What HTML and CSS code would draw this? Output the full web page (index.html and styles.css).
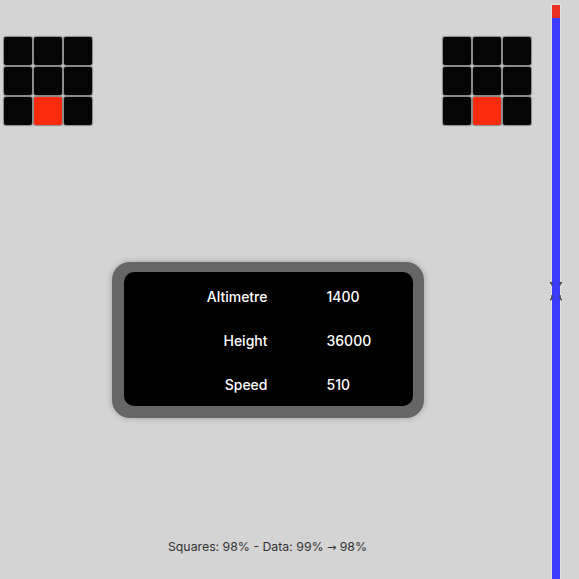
FILE: index.html
```html
<!DOCTYPE html>
<html>
<head>
<meta charset="utf-8">
<link rel="stylesheet" href="styles.css">
</head>
<body>
<div class="app">
  <div class="main">
    <div class="grids">
      <div class="grid">
        <div class="cell"></div><div class="cell"></div><div class="cell"></div>
        <div class="cell"></div><div class="cell"></div><div class="cell"></div>
        <div class="cell"></div><div class="cell red"></div><div class="cell"></div>
      </div>
      <div class="grid">
        <div class="cell"></div><div class="cell"></div><div class="cell"></div>
        <div class="cell"></div><div class="cell"></div><div class="cell"></div>
        <div class="cell"></div><div class="cell red"></div><div class="cell"></div>
      </div>
    </div>
    <div class="panel">
      <div class="panel-inner">
        <div class="row"><span class="label">Altimetre</span><span class="value">1400</span></div>
        <div class="row"><span class="label">Height</span><span class="value">36000</span></div>
        <div class="row"><span class="label">Speed</span><span class="value">510</span></div>
      </div>
    </div>
    <div class="status">Squares: 98% - Data: 99% <span class="arrow">→</span> 98%</div>
  </div>
  <div class="side">
    <div class="bar"><div class="bar-fill"></div></div>
    <svg class="cursor" width="15" height="21" viewBox="0 0 15 21">
      <path d="M1 1.5 C2.5 1.5 3 2 3 4.5 M13 1.5 C11.5 1.5 11 2 11 4.5 M3 14 C3 18 2.5 19 1 19 M11 14 C11 18 11.5 19 13 19" fill="none" stroke="#3a3a3a" stroke-width="1.3"/>
    </svg>
  </div>
</div>
</body>
</html>
```
FILE: styles.css
```css
html, body {
  margin: 0;
  padding: 0;
  background: #d4d4d4;
}
.app {
  display: flex;
  width: 579px;
  height: 579px;
  overflow: hidden;
  font-family: Inter, "Liberation Sans", sans-serif;
}
.main {
  width: 535px;
  display: flex;
  flex-direction: column;
}
.grids {
  display: flex;
  justify-content: space-between;
  padding: 37px 4px 0 4px;
}
.grid {
  display: grid;
  grid-template-columns: repeat(3, 28px);
  grid-template-rows: repeat(3, 28px);
  gap: 2px;
}
.cell {
  background: #050505;
  border-radius: 2px;
  box-shadow: 0 0 1px 1px rgba(0, 0, 0, 0.35);
}
.cell.red {
  background: #fa2a0c;
}
.panel {
  align-self: center;
  margin-top: 137px;
  width: 312px;
  height: 156px;
  box-sizing: border-box;
  padding: 10px 11px 12px 12px;
  background: #666666;
  border-radius: 18px;
  box-shadow: 0 0 6px rgba(0, 0, 0, 0.25);
}
.panel-inner {
  height: 100%;
  background: #000;
  border-radius: 10px;
  padding-top: 2px;
  box-sizing: border-box;
}
.row {
  display: grid;
  grid-template-columns: 144px 1fr;
  height: 44px;
  align-items: center;
  color: #fff;
  font-size: 14px;
  font-weight: 500;
}
.label {
  text-align: right;
}
.value {
  padding-left: 59px;
}
.status {
  margin-top: auto;
  margin-bottom: 23px;
  text-align: center;
  font-size: 12.3px;
  line-height: 16px;
  color: #333;
}
.arrow {
  font-family: "DejaVu Sans", sans-serif;
  font-size: 11px;
}
.side {
  position: relative;
  flex: 1;
}
.bar {
  margin: 5px 0 0 17px;
  width: 8px;
  height: 600px;
  background: #3b3dfb;
  box-shadow: 0 0 0 1px rgba(255, 255, 255, 0.35);
}
.bar-fill {
  height: 13px;
  background: #e8301f;
}
.cursor {
  position: absolute;
  left: 14px;
  top: 281px;
}
```
